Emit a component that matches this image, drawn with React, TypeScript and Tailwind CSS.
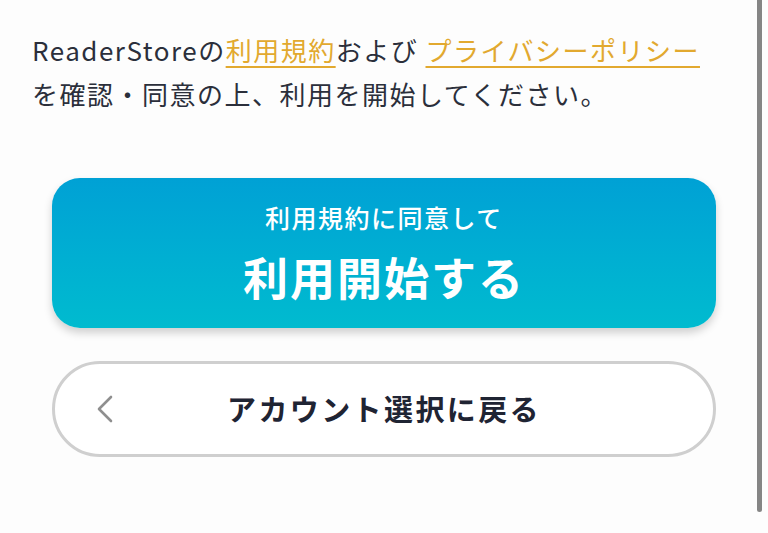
export default function App() {
  return (
    <div className="relative w-[768px] h-[533px] overflow-hidden bg-[#fdfdfd] font-['Noto_Sans_CJK_JP',sans-serif]">
      <div className="pt-[28px] pl-[32px] pr-[30px] text-[26px] leading-[44px] tracking-[1.5px] text-[#2b2f3b]">
        <p className="whitespace-nowrap">
          ReaderStoreの
          <a className="text-[#e2a92f] underline underline-offset-[5px] decoration-[1.5px]">利用規約</a>
          および{" "}
          <a className="text-[#e2a92f] underline underline-offset-[5px] decoration-[1.5px]">プライバシーポリシー</a>
        </p>
        <p>を確認・同意の上、利用を開始してください。</p>
      </div>

      <div className="flex flex-col gap-[33px] mt-[62px] ml-[52px] w-[664px]">
        <button className="h-[150px] rounded-[28px] bg-gradient-to-b from-[#00a1d5] to-[#00bbcf] shadow-[0_5px_8px_rgba(0,0,0,0.18)] flex flex-col items-center justify-center text-white">
          <span className="text-[25px] leading-[32px] font-medium tracking-[1.5px] mt-[2px]">利用規約に同意して</span>
          <span className="text-[45px] leading-[60px] font-bold tracking-[2px] mt-[14px]">利用開始する</span>
        </button>

        <button className="relative h-[96px] rounded-full border-[3px] border-[#cfcfcf] bg-white flex items-center justify-center">
          <svg
            className="absolute left-[40px] top-1/2 -translate-y-1/2"
            width="20"
            height="30"
            viewBox="0 0 20 30"
            fill="none"
            stroke="#8f8f8f"
            strokeWidth="2.6"
            strokeLinecap="round"
            strokeLinejoin="round"
          >
            <polyline points="16,3 4,15 16,27" />
          </svg>
          <span className="text-[29px] font-bold tracking-[2.4px] text-[#1f2433]">アカウント選択に戻る</span>
        </button>
      </div>

      <div className="absolute right-[6px] top-0 w-[5px] h-[512px] rounded-b-full bg-[#858585]" />
    </div>
  );
}
